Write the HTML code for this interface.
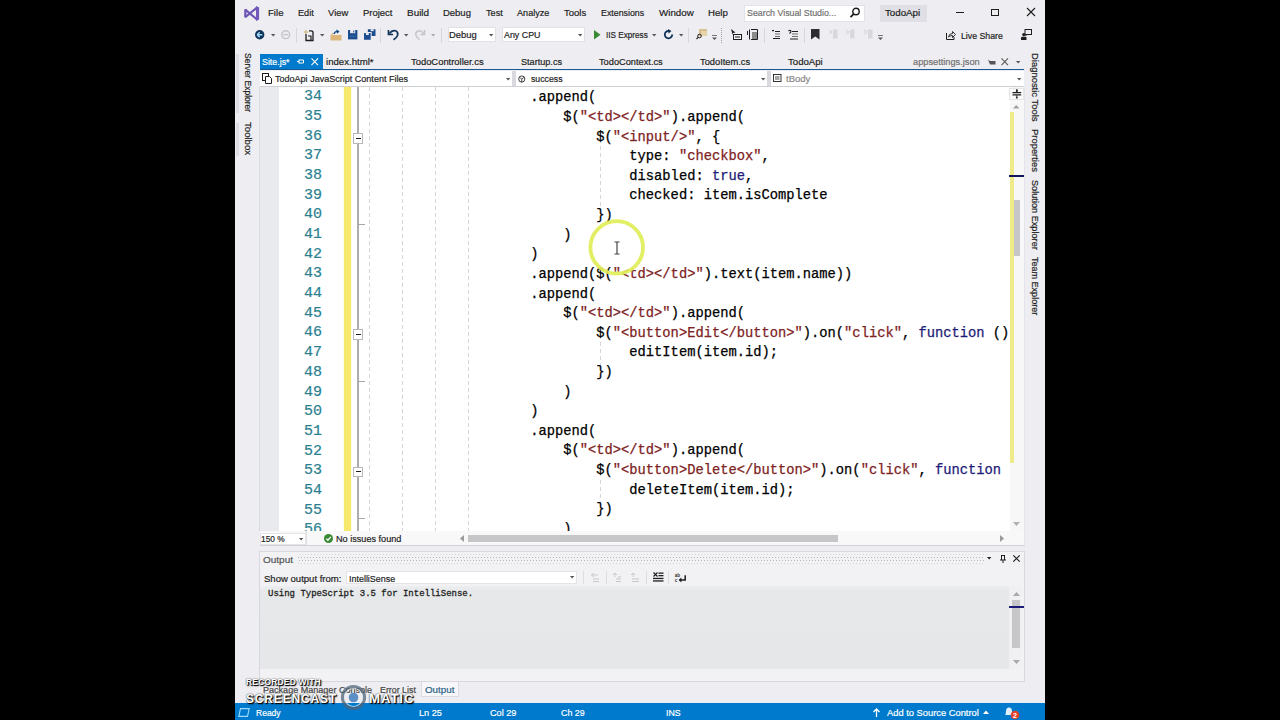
<!DOCTYPE html><html><head><meta charset="utf-8"><style>
*{margin:0;padding:0;box-sizing:border-box}
html,body{width:1280px;height:720px;overflow:hidden;background:#000}
body{position:relative;font-family:"Liberation Sans",sans-serif;font-size:9.3px;color:#1e1e1e}
.a{position:absolute;white-space:pre;line-height:1}
.c{position:absolute;white-space:pre;font-family:"Liberation Mono",monospace;font-size:13.77px;line-height:1;color:#000;-webkit-text-stroke:0.25px currentColor}
.s{color:#7E2222}
.t{color:#800000}
.k{color:#1C1C78}
.ln{position:absolute;font-family:"Liberation Mono",monospace;font-size:15px;line-height:1;color:#2B7F90;text-align:right;-webkit-text-stroke:0.2px #2B7F90;width:40px}
svg{position:absolute;overflow:visible}
</style></head><body>
<div class="a" style="left:235px;top:0px;width:810px;height:720px;background:#EEEEF2"></div>
<svg style="left:240px;top:2px" width="24" height="22" viewBox="0 0 24 22"><path d="M5.3 7.6 L17.2 17.6 L17.2 5.4 L5.3 15.2 Z" fill="none" stroke="#6F56B6" stroke-width="2.2" stroke-linejoin="bevel"/><path d="M16 4 L19.1 5.4 V17.4 L16 19 Z" fill="#7358BC"/></svg>
<div class="a" style="left:268.00px;top:7.80px;font-family:'Liberation Sans';font-size:9.8px;font-weight:normal;color:#1e1e1e;transform-origin:0 0;transform:scaleX(0.9812);-webkit-text-stroke:0.2px #1e1e1e;">File</div>
<div class="a" style="left:297.90px;top:7.80px;font-family:'Liberation Sans';font-size:9.8px;font-weight:normal;color:#1e1e1e;transform-origin:0 0;transform:scaleX(0.9354);-webkit-text-stroke:0.2px #1e1e1e;">Edit</div>
<div class="a" style="left:328.15px;top:7.80px;font-family:'Liberation Sans';font-size:9.8px;font-weight:normal;color:#1e1e1e;transform-origin:0 0;transform:scaleX(0.9662);-webkit-text-stroke:0.2px #1e1e1e;">View</div>
<div class="a" style="left:362.90px;top:7.80px;font-family:'Liberation Sans';font-size:9.8px;font-weight:normal;color:#1e1e1e;transform-origin:0 0;transform:scaleX(0.9672);-webkit-text-stroke:0.2px #1e1e1e;">Project</div>
<div class="a" style="left:406.90px;top:7.80px;font-family:'Liberation Sans';font-size:9.8px;font-weight:normal;color:#1e1e1e;transform-origin:0 0;transform:scaleX(1.0139);-webkit-text-stroke:0.2px #1e1e1e;">Build</div>
<div class="a" style="left:443.00px;top:7.80px;font-family:'Liberation Sans';font-size:9.8px;font-weight:normal;color:#1e1e1e;transform-origin:0 0;transform:scaleX(0.9662);-webkit-text-stroke:0.2px #1e1e1e;">Debug</div>
<div class="a" style="left:486.00px;top:7.80px;font-family:'Liberation Sans';font-size:9.8px;font-weight:normal;color:#1e1e1e;transform-origin:0 0;transform:scaleX(0.9350);-webkit-text-stroke:0.2px #1e1e1e;">Test</div>
<div class="a" style="left:517.20px;top:7.80px;font-family:'Liberation Sans';font-size:9.8px;font-weight:normal;color:#1e1e1e;transform-origin:0 0;transform:scaleX(0.9294);-webkit-text-stroke:0.2px #1e1e1e;">Analyze</div>
<div class="a" style="left:564.40px;top:7.80px;font-family:'Liberation Sans';font-size:9.8px;font-weight:normal;color:#1e1e1e;transform-origin:0 0;transform:scaleX(0.9705);-webkit-text-stroke:0.2px #1e1e1e;">Tools</div>
<div class="a" style="left:601.00px;top:7.80px;font-family:'Liberation Sans';font-size:9.8px;font-weight:normal;color:#1e1e1e;transform-origin:0 0;transform:scaleX(0.9012);-webkit-text-stroke:0.2px #1e1e1e;">Extensions</div>
<div class="a" style="left:658.80px;top:7.80px;font-family:'Liberation Sans';font-size:9.8px;font-weight:normal;color:#1e1e1e;transform-origin:0 0;transform:scaleX(0.9983);-webkit-text-stroke:0.2px #1e1e1e;">Window</div>
<div class="a" style="left:708.00px;top:7.80px;font-family:'Liberation Sans';font-size:9.8px;font-weight:normal;color:#1e1e1e;transform-origin:0 0;transform:scaleX(0.9823);-webkit-text-stroke:0.2px #1e1e1e;">Help</div>
<div class="a" style="left:743.5px;top:5px;width:121px;height:16.5px;background:#fff;border:1px solid #e2e2e8"></div>
<div class="a" style="left:747.40px;top:8.27px;font-family:'Liberation Sans';font-size:9.6px;font-weight:normal;color:#717171;transform-origin:0 0;transform:scaleX(0.9206);-webkit-text-stroke:0.2px #717171;">Search Visual Studio...</div>
<svg style="left:849px;top:7px" width="12" height="12" viewBox="0 0 12 12"><circle cx="7" cy="4.5" r="3.2" fill="none" stroke="#1e1e1e" stroke-width="1.4"/><path d="M4.8 6.8 L1.5 10.2" stroke="#1e1e1e" stroke-width="1.8"/></svg>
<div class="a" style="left:880px;top:5px;width:46.5px;height:17px;background:#dfdfe5"></div>
<div class="a" style="left:885.40px;top:8.17px;font-family:'Liberation Sans';font-size:9.6px;font-weight:normal;color:#1e1e1e;transform-origin:0 0;transform:scaleX(1.0152);-webkit-text-stroke:0.2px #1e1e1e;">TodoApi</div>
<div class="a" style="left:956px;top:11.5px;width:8px;height:1.2px;background:#1e1e1e"></div>
<div class="a" style="left:991px;top:8.5px;width:8px;height:7.5px;border:1.2px solid #1e1e1e"></div>
<svg style="left:1026.5px;top:8px" width="8" height="8" viewBox="0 0 8 8"><path d="M0 0 L8 8 M8 0 L0 8" stroke="#1e1e1e" stroke-width="1.1"/></svg>
<svg style="left:254.8px;top:30.2px" width="9.4" height="9.4" viewBox="0 0 10 10"><circle cx="5" cy="5" r="5" fill="#0E3157"/><path d="M2.2 5 L5 2.4 M2.2 5 L5 7.6 M2.4 5 H7.8" stroke="#9FD5F5" stroke-width="1.5" fill="none"/></svg>
<svg style="left:270.8px;top:33.699999999999996px" width="4.4" height="2.4" viewBox="0 0 4.4 2.4"><path d="M0 0 H4.4 L2.2 2.4 Z" fill="#555"/></svg>
<svg style="left:281px;top:30.2px" width="9.4" height="9.4" viewBox="0 0 10 10"><circle cx="5" cy="5" r="4.2" fill="none" stroke="#c4c4c8" stroke-width="1.5"/><path d="M2.6 5 H7.4" stroke="#c4c4c8" stroke-width="1.4"/></svg>
<div class="a" style="left:296px;top:28px;width:1px;height:15px;background:#d6d6dc"></div>
<svg style="left:304px;top:29.5px" width="11" height="11" viewBox="0 0 11 11"><path d="M2 4 V10.5 H9 V2.5 Q9 0.8 7 0.8 H5" fill="none" stroke="#1e1e1e" stroke-width="1.3"/><path d="M4 6 H7 V10" fill="none" stroke="#1e1e1e" stroke-width="1.2"/><path d="M2 0 V4 M0 2 H4" stroke="#C8B36A" stroke-width="1"/></svg>
<svg style="left:320.3px;top:33.699999999999996px" width="4.4" height="2.4" viewBox="0 0 4.4 2.4"><path d="M0 0 H4.4 L2.2 2.4 Z" fill="#555"/></svg>
<svg style="left:330px;top:29.5px" width="12" height="11" viewBox="0 0 12 11"><path d="M0.5 5 H11.5 V10.5 H0.5 Z" fill="#DCB67A"/><path d="M2 5 V3.5 H4" fill="none" stroke="#DCB67A" stroke-width="1"/><path d="M4 4 Q5 1 8 1.5 M6.5 0 L8.5 1.5 L7 3" fill="none" stroke="#1B4F8A" stroke-width="1.3"/></svg>
<svg style="left:347.8px;top:29.8px" width="9.4" height="9.4" viewBox="0 0 10 10"><path d="M0 0 H10 V10 H0 Z" fill="#1D4E8F"/><rect x="2.3" y="0" width="5.4" height="3.4" fill="#EEEEF2"/><rect x="5.6" y="0.6" width="1.1" height="2" fill="#1D4E8F"/><rect x="2" y="6.2" width="6" height="0.9" fill="#3E6FB0"/></svg>
<svg style="left:364px;top:29px" width="11.5" height="11" viewBox="0 0 12 11"><path d="M0 4 H7 V11 H0 Z" fill="#1D4E8F"/><rect x="2" y="4" width="3" height="2" fill="#EEEEF2"/><path d="M4 0 H12 V7 H8 V3 H4 Z" fill="#1D4E8F"/><rect x="7" y="0" width="3" height="2" fill="#EEEEF2"/></svg>
<div class="a" style="left:379.5px;top:28px;width:1px;height:15px;background:#d6d6dc"></div>
<svg style="left:387.5px;top:29px" width="11" height="11.5" viewBox="0 0 11 11.5"><path d="M1.5 4.5 Q4 0.8 7.5 1.8 Q10.5 3 9.5 6.5 Q8.7 8.6 5.5 10.8" fill="none" stroke="#0E3157" stroke-width="1.7"/><path d="M0.5 1 V5.5 H5" fill="none" stroke="#0E3157" stroke-width="1.7"/></svg>
<svg style="left:404.3px;top:33.699999999999996px" width="4.4" height="2.4" viewBox="0 0 4.4 2.4"><path d="M0 0 H4.4 L2.2 2.4 Z" fill="#555"/></svg>
<svg style="left:415px;top:29px" width="10" height="11" viewBox="0 0 10 11"><path d="M8.5 4.5 Q6 1 3 2 Q0 3.5 1 6.5 Q2 8.6 4.5 10.8" fill="none" stroke="#c4c4c8" stroke-width="1.5"/><path d="M9.5 1 V5.5 H5.5" fill="none" stroke="#c4c4c8" stroke-width="1.5"/></svg>
<svg style="left:431.3px;top:33.699999999999996px" width="4.4" height="2.4" viewBox="0 0 4.4 2.4"><path d="M0 0 H4.4 L2.2 2.4 Z" fill="#aaa"/></svg>
<div class="a" style="left:440.5px;top:28px;width:1px;height:15px;background:#d6d6dc"></div>
<div class="a" style="left:447.8px;top:26.9px;width:48.5px;height:15px;background:#fff;border:1px solid #e0e0e6"></div>
<div class="a" style="left:449.15px;top:29.57px;font-family:'Liberation Sans';font-size:9.6px;font-weight:normal;color:#1e1e1e;transform-origin:0 0;transform:scaleX(0.9794);-webkit-text-stroke:0.2px #1e1e1e;">Debug</div>
<svg style="left:488.8px;top:33.9px" width="4.4" height="2.4" viewBox="0 0 4.4 2.4"><path d="M0 0 H4.4 L2.2 2.4 Z" fill="#555"/></svg>
<div class="a" style="left:501.6px;top:26.9px;width:83.4px;height:15px;background:#fff;border:1px solid #e0e0e6"></div>
<div class="a" style="left:504.15px;top:29.57px;font-family:'Liberation Sans';font-size:9.6px;font-weight:normal;color:#1e1e1e;transform-origin:0 0;transform:scaleX(0.9239);-webkit-text-stroke:0.2px #1e1e1e;">Any CPU</div>
<svg style="left:578.3px;top:33.9px" width="4.4" height="2.4" viewBox="0 0 4.4 2.4"><path d="M0 0 H4.4 L2.2 2.4 Z" fill="#555"/></svg>
<svg style="left:594.4px;top:30px" width="6.5" height="9.5" viewBox="0 0 6.5 9.5"><path d="M0 0 L6.5 4.75 L0 9.5 Z" fill="#388A34"/></svg>
<div class="a" style="left:606.30px;top:29.87px;font-family:'Liberation Sans';font-size:9.6px;font-weight:normal;color:#1e1e1e;transform-origin:0 0;transform:scaleX(0.8520);-webkit-text-stroke:0.2px #1e1e1e;">IIS Express</div>
<svg style="left:652.3px;top:33.9px" width="4.4" height="2.4" viewBox="0 0 4.4 2.4"><path d="M0 0 H4.4 L2.2 2.4 Z" fill="#555"/></svg>
<svg style="left:663.5px;top:29px" width="10" height="11" viewBox="0 0 10 11"><path d="M8.2 5.5 A3.7 3.7 0 1 1 5 2" fill="none" stroke="#0E3157" stroke-width="1.8"/><path d="M4 0 L7.5 2 L4.5 4.5 Z" fill="#0E3157"/></svg>
<svg style="left:678.8px;top:33.9px" width="4.4" height="2.4" viewBox="0 0 4.4 2.4"><path d="M0 0 H4.4 L2.2 2.4 Z" fill="#555"/></svg>
<div class="a" style="left:688px;top:28px;width:1px;height:15px;background:#d6d6dc"></div>
<svg style="left:696px;top:29px" width="11" height="11" viewBox="0 0 11 11"><rect x="3" y="0" width="8" height="7" fill="#D9C08F"/><rect x="5" y="2" width="6" height="5" fill="#E5D3AC"/><circle cx="3.5" cy="7" r="1.8" fill="none" stroke="#1e1e1e" stroke-width="1"/><path d="M2.2 8.3 L0.5 10" stroke="#1e1e1e" stroke-width="1.1"/></svg>
<svg style="left:712px;top:35px" width="5" height="6" viewBox="0 0 5 6"><path d="M0 0.5 H5" stroke="#555" stroke-width="0.8"/><path d="M0 2.5 H5 L2.5 5 Z" fill="#555"/></svg>
<svg style="left:721px;top:28px" width="3" height="15" viewBox="0 0 3 15"><rect x="0" y="0" width="1" height="1" fill="#a0a0a8"/><rect x="0" y="2" width="1" height="1" fill="#a0a0a8"/><rect x="0" y="4" width="1" height="1" fill="#a0a0a8"/><rect x="0" y="6" width="1" height="1" fill="#a0a0a8"/><rect x="0" y="8" width="1" height="1" fill="#a0a0a8"/><rect x="0" y="10" width="1" height="1" fill="#a0a0a8"/><rect x="0" y="12" width="1" height="1" fill="#a0a0a8"/><rect x="0" y="14" width="1" height="1" fill="#a0a0a8"/></svg>
<svg style="left:730.6px;top:29px" width="11" height="11" viewBox="0 0 11 11"><path d="M0 0 L4.5 3.5 L2 4 L1.6 6 Z" fill="#1e1e1e"/><rect x="2.5" y="5.5" width="8" height="5" fill="none" stroke="#1e1e1e" stroke-width="1"/><rect x="4" y="7.5" width="5" height="1" fill="#1e1e1e"/></svg>
<svg style="left:747px;top:29px" width="11" height="11" viewBox="0 0 11 11"><path d="M0.5 2 V6" stroke="#1e1e1e" stroke-width="1"/><path d="M2.5 0.5 V10.5 M4 0.5 H10.5 V10.5 H4" fill="none" stroke="#1e1e1e" stroke-width="1"/><rect x="5" y="3" width="5" height="7" fill="#8a8a8a"/></svg>
<div class="a" style="left:763.5px;top:28px;width:1px;height:15px;background:#d6d6dc"></div>
<svg style="left:771.5px;top:30px" width="8" height="9" viewBox="0 0 8 9"><rect x="0" y="0" width="2" height="1.2" fill="#1e1e1e"/><rect x="3" y="1" width="5" height="1" fill="#1e1e1e"/><rect x="3" y="3.5" width="5" height="1" fill="#707070"/><rect x="3" y="6" width="5" height="1" fill="#707070"/><rect x="1" y="8" width="7" height="1" fill="#1e1e1e"/></svg>
<svg style="left:787.5px;top:30px" width="10" height="9.5" viewBox="0 0 10 9.5"><path d="M0.5 1 Q2 -0.5 3 1 Q3 2.5 1.5 3.5" fill="none" stroke="#1e1e1e" stroke-width="1.1"/><rect x="4" y="1" width="6" height="1" fill="#1e1e1e"/><rect x="4" y="3.5" width="6" height="1" fill="#707070"/><rect x="4" y="6" width="6" height="1" fill="#707070"/><rect x="2" y="8.5" width="8" height="1" fill="#1e1e1e"/></svg>
<div class="a" style="left:803.5px;top:28px;width:1px;height:15px;background:#d6d6dc"></div>
<svg style="left:811px;top:29px" width="8.5" height="10.5" viewBox="0 0 8.5 10.5"><path d="M0 0 H8.5 V10.5 L4.25 7.5 L0 10.5 Z" fill="#2d2d30"/></svg>
<svg style="left:829px;top:29px" width="9" height="10" viewBox="0 0 9 10"><path d="M0 1 L3 3 L0 5" fill="none" stroke="#cfcfd4" stroke-width="1"/><rect x="4" y="0.5" width="4.5" height="9" fill="#d8d8dc"/></svg>
<svg style="left:846px;top:29px" width="9" height="10" viewBox="0 0 9 10"><path d="M0 1 L3 3 L0 5" fill="none" stroke="#cfcfd4" stroke-width="1"/><rect x="4" y="0.5" width="4.5" height="9" fill="#d8d8dc"/></svg>
<svg style="left:864px;top:29px" width="9" height="10" viewBox="0 0 9 10"><path d="M0 1 L3 3 L0 5" fill="none" stroke="#cfcfd4" stroke-width="1"/><rect x="4" y="0.5" width="4.5" height="9" fill="#d8d8dc"/></svg>
<svg style="left:877.5px;top:35px" width="5" height="6" viewBox="0 0 5 6"><path d="M0 0.5 H5" stroke="#555" stroke-width="0.8"/><path d="M0 2.5 H5 L2.5 5 Z" fill="#555"/></svg>
<svg style="left:946px;top:30px" width="10" height="10" viewBox="0 0 10 10"><path d="M0.5 3 V9.5 H8 V7" fill="none" stroke="#1e1e1e" stroke-width="1"/><path d="M2.5 7 Q3 3.5 6.5 3.5 V1.5 L9.5 4.5 L6.5 7.5 V5.5 Q4 5.5 2.5 7 Z" fill="none" stroke="#1e1e1e" stroke-width="0.9"/></svg>
<div class="a" style="left:960.80px;top:30.67px;font-family:'Liberation Sans';font-size:9.6px;font-weight:normal;color:#1e1e1e;transform-origin:0 0;transform:scaleX(0.9112);-webkit-text-stroke:0.2px #1e1e1e;">Live Share</div>
<svg style="left:1021px;top:29px" width="11" height="11" viewBox="0 0 11 11"><rect x="4" y="0.5" width="6.5" height="5" fill="none" stroke="#1e1e1e" stroke-width="1"/><path d="M5 5.5 L4 7.5 L7 5.5" fill="#1e1e1e"/><circle cx="2.8" cy="5.6" r="1.6" fill="#1e1e1e"/><path d="M0 11 V9 Q0 7.8 1.5 7.8 H4.2 Q5.5 7.8 5.5 9 V11 Z" fill="#1e1e1e"/></svg>
<div class="a" style="left:235.5px;top:54px;width:3.5px;height:58.5px;background:#DCDDE5"></div>
<div class="a" style="left:235.5px;top:122.5px;width:3.5px;height:33px;background:#DCDDE5"></div>
<div class="a" style="left:253.00px;top:53.40px;font-size:9.6px;color:#1e1e1e;transform-origin:0 0;transform:rotate(90deg) scaleX(0.8881);-webkit-text-stroke:0.2px #1e1e1e">Server Explorer</div>
<div class="a" style="left:253.00px;top:121.90px;font-size:9.6px;color:#1e1e1e;transform-origin:0 0;transform:rotate(90deg) scaleX(1.0007);-webkit-text-stroke:0.2px #1e1e1e">Toolbox</div>
<div class="a" style="left:1023.5px;top:87px;width:1px;height:460px;background:#e4e4ea"></div>
<div class="a" style="left:1040.00px;top:53.00px;font-size:9.6px;color:#1e1e1e;transform-origin:0 0;transform:rotate(90deg) scaleX(0.9830);-webkit-text-stroke:0.2px #1e1e1e">Diagnostic Tools</div>
<div class="a" style="left:1040.00px;top:129.20px;font-size:9.6px;color:#1e1e1e;transform-origin:0 0;transform:rotate(90deg) scaleX(0.9809);-webkit-text-stroke:0.2px #1e1e1e">Properties</div>
<div class="a" style="left:1040.00px;top:179.80px;font-size:9.6px;color:#1e1e1e;transform-origin:0 0;transform:rotate(90deg) scaleX(0.9553);-webkit-text-stroke:0.2px #1e1e1e">Solution Explorer</div>
<div class="a" style="left:1040.00px;top:257.40px;font-size:9.6px;color:#1e1e1e;transform-origin:0 0;transform:rotate(90deg) scaleX(0.9408);-webkit-text-stroke:0.2px #1e1e1e">Team Explorer</div>
<div class="a" style="left:259.5px;top:54px;width:63px;height:15px;background:#007ACC"></div>
<div class="a" style="left:262.30px;top:57.17px;font-family:'Liberation Sans';font-size:9.6px;font-weight:normal;color:#ffffff;transform-origin:0 0;transform:scaleX(0.9210);-webkit-text-stroke:0.2px #ffffff;">Site.js*</div>
<svg style="left:296.5px;top:59px" width="7" height="5" viewBox="0 0 7 5"><path d="M0 2.5 H2 M2 0.5 V4.5 M2 1 H6.5 V4 H2" fill="none" stroke="#fff" stroke-width="1"/></svg>
<svg style="left:311px;top:57.5px" width="7.5" height="7.5" viewBox="0 0 8 8"><path d="M0.5 0.5 L7.5 7.5 M7.5 0.5 L0.5 7.5" stroke="#fff" stroke-width="1.2"/></svg>
<div class="a" style="left:326.00px;top:57.17px;font-family:'Liberation Sans';font-size:9.6px;font-weight:normal;color:#1e1e1e;transform-origin:0 0;transform:scaleX(1.0028);-webkit-text-stroke:0.2px #1e1e1e;">index.html*</div>
<div class="a" style="left:411.30px;top:57.17px;font-family:'Liberation Sans';font-size:9.6px;font-weight:normal;color:#1e1e1e;transform-origin:0 0;transform:scaleX(0.9794);-webkit-text-stroke:0.2px #1e1e1e;">TodoController.cs</div>
<div class="a" style="left:520.80px;top:57.17px;font-family:'Liberation Sans';font-size:9.6px;font-weight:normal;color:#1e1e1e;transform-origin:0 0;transform:scaleX(0.9490);-webkit-text-stroke:0.2px #1e1e1e;">Startup.cs</div>
<div class="a" style="left:598.90px;top:57.17px;font-family:'Liberation Sans';font-size:9.6px;font-weight:normal;color:#1e1e1e;transform-origin:0 0;transform:scaleX(0.9633);-webkit-text-stroke:0.2px #1e1e1e;">TodoContext.cs</div>
<div class="a" style="left:700.20px;top:57.17px;font-family:'Liberation Sans';font-size:9.6px;font-weight:normal;color:#1e1e1e;transform-origin:0 0;transform:scaleX(0.9684);-webkit-text-stroke:0.2px #1e1e1e;">TodoItem.cs</div>
<div class="a" style="left:787.80px;top:57.17px;font-family:'Liberation Sans';font-size:9.6px;font-weight:normal;color:#1e1e1e;transform-origin:0 0;transform:scaleX(1.0008);-webkit-text-stroke:0.2px #1e1e1e;">TodoApi</div>
<div class="a" style="left:913.10px;top:57.17px;font-family:'Liberation Sans';font-size:9.6px;font-weight:normal;color:#717171;transform-origin:0 0;transform:scaleX(0.9619);-webkit-text-stroke:0.2px #717171;">appsettings.json</div>
<svg style="left:987.5px;top:58.5px" width="8" height="6" viewBox="0 0 8 6"><path d="M0 0.5 L2 2 H7.5 V5.5 H2 Z" fill="#555"/></svg>
<svg style="left:1001px;top:57.5px" width="7.5" height="7.5" viewBox="0 0 8 8"><path d="M0.5 0.5 L7.5 7.5 M7.5 0.5 L0.5 7.5" stroke="#555" stroke-width="1.1"/></svg>
<svg style="left:1015.8px;top:60.9px" width="4.4" height="2.4" viewBox="0 0 4.4 2.4"><path d="M0 0 H4.4 L2.2 2.4 Z" fill="#555"/></svg>
<div class="a" style="left:259.5px;top:68.6px;width:764px;height:1.8px;background:#155A94"></div>
<div class="a" style="left:259.5px;top:70.5px;width:764px;height:16px;background:#fff;border-bottom:1px solid #cfcfd6"></div>
<div class="a" style="left:512px;top:70.5px;width:4px;height:15.5px;background:#d8d8de"></div>
<div class="a" style="left:767px;top:70.5px;width:3.5px;height:15.5px;background:#d8d8de"></div>
<svg style="left:262px;top:73px" width="10" height="11" viewBox="0 0 10 11"><rect x="0.5" y="0.5" width="6" height="7" fill="none" stroke="#1e1e1e" stroke-width="1"/><path d="M3.5 3.5 H7.5 L9.5 5.5 V10.5 H3.5 Z" fill="#fff" stroke="#1e1e1e" stroke-width="1"/></svg>
<div class="a" style="left:275.40px;top:74.37px;font-family:'Liberation Sans';font-size:9.6px;font-weight:normal;color:#1e1e1e;transform-origin:0 0;transform:scaleX(0.9412);-webkit-text-stroke:0.2px #1e1e1e;">TodoApi JavaScript Content Files</div>
<svg style="left:505.8px;top:77.9px" width="4.4" height="2.4" viewBox="0 0 4.4 2.4"><path d="M0 0 H4.4 L2.2 2.4 Z" fill="#555"/></svg>
<svg style="left:518px;top:74.5px" width="7.5" height="8" viewBox="0 0 8 8"><circle cx="4" cy="4" r="3.3" fill="none" stroke="#1e1e1e" stroke-width="0.9"/><path d="M4 4 V7.5 M4 4 L1.5 2.2 M4 4 L6.5 2.2" stroke="#1e1e1e" stroke-width="0.8"/></svg>
<div class="a" style="left:531.10px;top:74.17px;font-family:'Liberation Sans';font-size:9.6px;font-weight:normal;color:#1e1e1e;transform-origin:0 0;transform:scaleX(0.9089);-webkit-text-stroke:0.2px #1e1e1e;">success</div>
<svg style="left:761.3px;top:77.9px" width="4.4" height="2.4" viewBox="0 0 4.4 2.4"><path d="M0 0 H4.4 L2.2 2.4 Z" fill="#555"/></svg>
<svg style="left:773px;top:74px" width="8.5" height="8" viewBox="0 0 8.5 8"><rect x="0.5" y="0.5" width="7.5" height="7" fill="none" stroke="#1e1e1e" stroke-width="0.9"/><path d="M2 3 H6.5 M2 5 H6.5" stroke="#1e1e1e" stroke-width="0.8"/></svg>
<div class="a" style="left:786.10px;top:74.17px;font-family:'Liberation Sans';font-size:9.6px;font-weight:normal;color:#888;transform-origin:0 0;transform:scaleX(0.9940);-webkit-text-stroke:0.2px #888;">tBody</div>
<svg style="left:1016.8px;top:77.9px" width="4.4" height="2.4" viewBox="0 0 4.4 2.4"><path d="M0 0 H4.4 L2.2 2.4 Z" fill="#555"/></svg>
<div class="a" style="left:259.5px;top:87px;width:751px;height:444px;background:#fff"></div>
<div class="a" style="left:259.5px;top:87px;width:19.5px;height:444px;background:#E9EAEE"></div>
<div class="a" style="left:258.8px;top:87px;width:1.2px;height:444px;background:#DADADF"></div>
<div class="a" style="left:344px;top:87px;width:7px;height:444px;background:#F6E86A;box-shadow:0 0 1px #F6E86A"></div>
<div class="a" style="left:357.2px;top:87px;width:1.6px;height:444px;background:#ADADAD"></div>
<div class="a" style="left:259.5px;top:87px;width:751px;height:444px;overflow:hidden">
<div class="a" style="left:109.00px;top:0.00px;width:1px;height:444.00px;background:repeating-linear-gradient(to bottom,#d6d6d6 0,#d6d6d6 4px,transparent 4px,transparent 7px)"></div>
<div class="a" style="left:142.04px;top:0.00px;width:1px;height:444.00px;background:repeating-linear-gradient(to bottom,#d6d6d6 0,#d6d6d6 4px,transparent 4px,transparent 7px)"></div>
<div class="a" style="left:175.08px;top:0.00px;width:1px;height:444.00px;background:repeating-linear-gradient(to bottom,#d6d6d6 0,#d6d6d6 4px,transparent 4px,transparent 7px)"></div>
<div class="a" style="left:208.12px;top:0.00px;width:1px;height:444.00px;background:repeating-linear-gradient(to bottom,#d6d6d6 0,#d6d6d6 4px,transparent 4px,transparent 7px)"></div>
<div class="a" style="left:340.28px;top:59.19px;width:1px;height:64.86px;background:repeating-linear-gradient(to bottom,#d6d6d6 0,#d6d6d6 4px,transparent 4px,transparent 7px)"></div>
<div class="a" style="left:340.28px;top:255.39px;width:1px;height:25.62px;background:repeating-linear-gradient(to bottom,#d6d6d6 0,#d6d6d6 4px,transparent 4px,transparent 7px)"></div>
<div class="a" style="left:340.28px;top:392.73px;width:1px;height:25.62px;background:repeating-linear-gradient(to bottom,#d6d6d6 0,#d6d6d6 4px,transparent 4px,transparent 7px)"></div>
<div class="c" style="left:270.70px;top:4.33px">.append(</div>
<div class="ln" style="left:22.5px;top:2.31px">34</div>
<div class="c" style="left:303.74px;top:23.95px">$(<span class="s">&quot;&lt;td&gt;&lt;/td&gt;&quot;</span>).append(</div>
<div class="ln" style="left:22.5px;top:21.99px">35</div>
<div class="c" style="left:336.78px;top:43.57px">$(<span class="s">&quot;&lt;input/&gt;&quot;</span>, {</div>
<div class="ln" style="left:22.5px;top:41.67px">36</div>
<div class="c" style="left:369.82px;top:63.19px">type: <span class="s">&quot;checkbox&quot;</span>,</div>
<div class="ln" style="left:22.5px;top:61.35px">37</div>
<div class="c" style="left:369.82px;top:82.81px">disabled: <span class="k">true</span>,</div>
<div class="ln" style="left:22.5px;top:81.03px">38</div>
<div class="c" style="left:369.82px;top:102.43px">checked: item.isComplete</div>
<div class="ln" style="left:22.5px;top:100.71px">39</div>
<div class="c" style="left:336.78px;top:122.05px">})</div>
<div class="ln" style="left:22.5px;top:120.39px">40</div>
<div class="c" style="left:303.74px;top:141.67px">)</div>
<div class="ln" style="left:22.5px;top:140.07px">41</div>
<div class="c" style="left:270.70px;top:161.29px">)</div>
<div class="ln" style="left:22.5px;top:159.75px">42</div>
<div class="c" style="left:270.70px;top:180.91px">.append($(<span class="s">&quot;&lt;td&gt;&lt;/td&gt;&quot;</span>).text(item.name))</div>
<div class="ln" style="left:22.5px;top:179.43px">43</div>
<div class="c" style="left:270.70px;top:200.53px">.append(</div>
<div class="ln" style="left:22.5px;top:199.11px">44</div>
<div class="c" style="left:303.74px;top:220.15px">$(<span class="s">&quot;&lt;td&gt;&lt;/td&gt;&quot;</span>).append(</div>
<div class="ln" style="left:22.5px;top:218.79px">45</div>
<div class="c" style="left:336.78px;top:239.77px">$(<span class="s">&quot;&lt;button&gt;Edit&lt;/button&gt;&quot;</span>).on(<span class="s">&quot;click&quot;</span>, <span class="k">function</span> ()</div>
<div class="ln" style="left:22.5px;top:238.47px">46</div>
<div class="c" style="left:369.82px;top:259.39px">editItem(item.id);</div>
<div class="ln" style="left:22.5px;top:258.15px">47</div>
<div class="c" style="left:336.78px;top:279.01px">})</div>
<div class="ln" style="left:22.5px;top:277.83px">48</div>
<div class="c" style="left:303.74px;top:298.63px">)</div>
<div class="ln" style="left:22.5px;top:297.51px">49</div>
<div class="c" style="left:270.70px;top:318.25px">)</div>
<div class="ln" style="left:22.5px;top:317.19px">50</div>
<div class="c" style="left:270.70px;top:337.87px">.append(</div>
<div class="ln" style="left:22.5px;top:336.87px">51</div>
<div class="c" style="left:303.74px;top:357.49px">$(<span class="s">&quot;&lt;td&gt;&lt;/td&gt;&quot;</span>).append(</div>
<div class="ln" style="left:22.5px;top:356.55px">52</div>
<div class="c" style="left:336.78px;top:377.11px">$(<span class="s">&quot;&lt;button&gt;Delete&lt;/button&gt;&quot;</span>).on(<span class="s">&quot;click&quot;</span>, <span class="k">function</span> ()</div>
<div class="ln" style="left:22.5px;top:376.23px">53</div>
<div class="c" style="left:369.82px;top:396.73px">deleteItem(item.id);</div>
<div class="ln" style="left:22.5px;top:395.91px">54</div>
<div class="c" style="left:336.78px;top:416.35px">})</div>
<div class="ln" style="left:22.5px;top:415.59px">55</div>
<div class="c" style="left:303.74px;top:435.97px">)</div>
<div class="ln" style="left:22.5px;top:435.27px">56</div>
<div class="a" style="left:98.5px;top:136.92px;width:6.5px;height:1.2px;background:#A6A6A6"></div>
<div class="a" style="left:98.5px;top:293.88px;width:6.5px;height:1.2px;background:#A6A6A6"></div>
<div class="a" style="left:98.5px;top:431.22px;width:6.5px;height:1.2px;background:#A6A6A6"></div>
<div class="a" style="left:93.5px;top:46.04px;width:10px;height:10.5px;background:#fff;border:1px solid #B8B8B8"></div>
<div class="a" style="left:96.0px;top:50.54px;width:5px;height:1.2px;background:#1e1e1e"></div>
<div class="a" style="left:93.5px;top:242.24px;width:10px;height:10.5px;background:#fff;border:1px solid #B8B8B8"></div>
<div class="a" style="left:96.0px;top:246.74px;width:5px;height:1.2px;background:#1e1e1e"></div>
<div class="a" style="left:93.5px;top:379.58px;width:10px;height:10.5px;background:#fff;border:1px solid #B8B8B8"></div>
<div class="a" style="left:96.0px;top:384.08px;width:5px;height:1.2px;background:#1e1e1e"></div>
</div>
<div class="a" style="left:1009.5px;top:87px;width:14px;height:444px;background:#F7F7F8"></div>
<div class="a" style="left:1009.3px;top:88.3px;width:14.5px;height:11.5px;background:#fbfbfb;border:1px solid #e6e6e6"></div>
<svg style="left:1011.5px;top:88.5px" width="10" height="11" viewBox="0 0 10 11"><path d="M0.5 3.7 H9.2 M0.5 5.8 H9.2" stroke="#1e1e1e" stroke-width="1.2"/><path d="M4.85 0.8 V3.2 M4.85 6.3 V9.5" stroke="#1e1e1e" stroke-width="1"/><circle cx="4.85" cy="1.2" r="0.9" fill="#1e1e1e"/><path d="M3.6 2.2 L4.85 3.3 L6.1 2.2 Z M3.6 8.2 L4.85 9.6 L6.1 8.2 Z" fill="#1e1e1e"/></svg>
<svg style="left:1013px;top:105.2px" width="6.5" height="3.6" viewBox="0 0 6.5 3.6"><path d="M0 3.6 L3.25 0 L6.5 3.6 Z" fill="#a0a0a0"/></svg>
<div class="a" style="left:1010px;top:111.7px;width:4px;height:351.6px;background:#EFEB88"></div>
<div class="a" style="left:1013.5px;top:200px;width:6.7px;height:56.3px;background:#C6C6C8"></div>
<div class="a" style="left:1008.5px;top:174.5px;width:15px;height:2px;background:#14145a"></div>
<svg style="left:1013px;top:521.5px" width="7" height="4" viewBox="0 0 7 4"><path d="M0 0 L3.5 4 L7 0 Z" fill="#b0b0b0"/></svg>
<div class="a" style="left:259.5px;top:531px;width:764px;height:14.5px;background:#F8F8F9"></div>
<div class="a" style="left:259.5px;top:532.7px;width:46px;height:12px;background:#fff;border:1px solid #e4e4e8"></div>
<div class="a" style="left:261.00px;top:535.08px;font-family:'Liberation Sans';font-size:9.0px;font-weight:normal;color:#1e1e1e;transform-origin:0 0;transform:scaleX(0.9244);-webkit-text-stroke:0.2px #1e1e1e;">150 %</div>
<svg style="left:298.8px;top:538.4px" width="4.4" height="2.4" viewBox="0 0 4.4 2.4"><path d="M0 0 H4.4 L2.2 2.4 Z" fill="#555"/></svg>
<div class="a" style="left:306px;top:531px;width:1px;height:14px;background:#e0e0e4"></div>
<svg style="left:323.9px;top:534.2px" width="9" height="9" viewBox="0 0 9 9"><circle cx="4.5" cy="4.5" r="4.5" fill="#388A34"/><path d="M2.2 4.6 L3.9 6.2 L6.8 2.9" fill="none" stroke="#fff" stroke-width="1.3"/></svg>
<div class="a" style="left:336.20px;top:534.83px;font-family:'Liberation Sans';font-size:9.3px;font-weight:normal;color:#1e1e1e;transform-origin:0 0;transform:scaleX(0.9809);-webkit-text-stroke:0.2px #1e1e1e;">No issues found</div>
<svg style="left:460.3px;top:535px" width="4" height="7" viewBox="0 0 4 7"><path d="M4 0 L0 3.5 L4 7 Z" fill="#9a9a9a"/></svg>
<div class="a" style="left:468px;top:535px;width:370px;height:6.8px;background:#C6C6C8"></div>
<svg style="left:1000px;top:535px" width="4" height="7" viewBox="0 0 4 7"><path d="M0 0 L4 3.5 L0 7 Z" fill="#9a9a9a"/></svg>
<div class="a" style="left:259.5px;top:545.3px;width:764px;height:1px;background:#d0d0d6"></div>
<div class="a" style="left:259px;top:550.5px;width:765.5px;height:131px;background:#F2F2F5;border:1px solid #d8d8de"></div>
<div class="a" style="left:262.50px;top:554.87px;font-family:'Liberation Sans';font-size:9.6px;font-weight:normal;color:#555;transform-origin:0 0;transform:scaleX(1.0412);-webkit-text-stroke:0.2px #555;">Output</div>
<div class="a" style="left:297.5px;top:556.5px;width:686px;height:1px;background-image:linear-gradient(to right,#b6b6be 1px,transparent 1px);background-size:3px 1px"></div>
<div class="a" style="left:299px;top:559.5px;width:686px;height:1px;background-image:linear-gradient(to right,#b6b6be 1px,transparent 1px);background-size:3px 1px"></div>
<div class="a" style="left:299px;top:553.5px;width:686px;height:1px;opacity:0.45;background-image:linear-gradient(to right,#b6b6be 1px,transparent 1px);background-size:3px 1px"></div>
<div class="a" style="left:297.5px;top:562.5px;width:686px;height:1px;opacity:0.45;background-image:linear-gradient(to right,#b6b6be 1px,transparent 1px);background-size:3px 1px"></div>
<svg style="left:987.3px;top:557.1999999999999px" width="4.4" height="2.4" viewBox="0 0 4.4 2.4"><path d="M0 0 H4.4 L2.2 2.4 Z" fill="#1e1e1e"/></svg>
<svg style="left:999.5px;top:554.5px" width="6" height="8" viewBox="0 0 6 8"><path d="M1 0.5 H5 M1.5 0.5 V5 M4.5 0.5 V5 M0 5 H6 M3 5 V8" fill="none" stroke="#1e1e1e" stroke-width="1"/></svg>
<svg style="left:1012.5px;top:554.5px" width="7" height="7" viewBox="0 0 7 7"><path d="M0.3 0.3 L6.7 6.7 M6.7 0.3 L0.3 6.7" stroke="#1e1e1e" stroke-width="1.2"/></svg>
<div class="a" style="left:264.40px;top:573.92px;font-family:'Liberation Sans';font-size:9.6px;font-weight:normal;color:#1e1e1e;transform-origin:0 0;transform:scaleX(0.9947);-webkit-text-stroke:0.2px #1e1e1e;">Show output from:</div>
<div class="a" style="left:346.2px;top:570.5px;width:230.8px;height:13.5px;background:#fff;border:1px solid #e4e4e8"></div>
<div class="a" style="left:349.40px;top:573.92px;font-family:'Liberation Sans';font-size:9.6px;font-weight:normal;color:#1e1e1e;transform-origin:0 0;transform:scaleX(0.9313);-webkit-text-stroke:0.2px #1e1e1e;">IntelliSense</div>
<svg style="left:569.8px;top:576.4px" width="4.4" height="2.4" viewBox="0 0 4.4 2.4"><path d="M0 0 H4.4 L2.2 2.4 Z" fill="#555"/></svg>
<div class="a" style="left:582.5px;top:571px;width:1px;height:13px;background:#dcdce2"></div>
<div class="a" style="left:605.5px;top:571px;width:1px;height:13px;background:#dcdce2"></div>
<div class="a" style="left:645.5px;top:571px;width:1px;height:13px;background:#dcdce2"></div>
<div class="a" style="left:668px;top:571px;width:1px;height:13px;background:#dcdce2"></div>
<svg style="left:590px;top:572px" width="10" height="11" viewBox="0 0 10 11"><path d="M4 1 L1.5 3 L4 5 M1.5 3 H8 M3 7 H9 M3 9.5 H9" fill="none" stroke="#c8c8cc" stroke-width="1"/></svg>
<svg style="left:612px;top:572px" width="10" height="11" viewBox="0 0 10 11"><path d="M3 5 V1 M1 3 L3 1 L5 3 M4 7 H9 M4 9.5 H9 M6 5 H9" fill="none" stroke="#c8c8cc" stroke-width="1"/></svg>
<svg style="left:630px;top:572px" width="10" height="11" viewBox="0 0 10 11"><path d="M3 5 V1 M1 3 L3 1 L5 3 M2 7 H9 M2 9.5 H9" fill="none" stroke="#c8c8cc" stroke-width="1"/></svg>
<svg style="left:653px;top:572px" width="10.5" height="11" viewBox="0 0 10.5 11"><path d="M0.5 0.5 L4.5 4.5 M4.5 0.5 L0.5 4.5" stroke="#1e1e1e" stroke-width="1.1"/><rect x="5.5" y="0.5" width="5" height="1.3" fill="#1e1e1e"/><rect x="5.5" y="3" width="5" height="1.3" fill="#1e1e1e"/><rect x="0" y="5.8" width="10.5" height="1.3" fill="#1e1e1e"/><rect x="0" y="8.3" width="10.5" height="1.3" fill="#1e1e1e"/></svg>
<svg style="left:675px;top:572.5px" width="11" height="10" viewBox="0 0 11 10"><text x="-0.3" y="3.8" font-size="4.6" font-weight="bold" font-family="Liberation Sans" fill="#333">ab</text><text x="-0.3" y="8.6" font-size="4.6" font-weight="bold" font-family="Liberation Sans" fill="#333">c</text><path d="M10.2 2.2 V7 H4.8" fill="none" stroke="#1e1e1e" stroke-width="1.5"/><path d="M3.6 7 L6.4 4.6 V9.4 Z" fill="#1e1e1e"/></svg>
<div class="a" style="left:260px;top:585.5px;width:749px;height:83px;background:linear-gradient(to bottom,#eceef0 0,#E6E8E9 5px,#E5E7E8 100%)"></div>
<div class="a" style="left:268.15px;top:589.05px;font-family:'Liberation Mono';font-size:9.6px;font-weight:normal;color:#1e1e1e;transform-origin:0 0;transform:scaleX(0.9377);-webkit-text-stroke:0.2px #1e1e1e;-webkit-text-stroke:0.3px #1e1e1e">Using TypeScript 3.5 for IntelliSense.</div>
<div class="a" style="left:1009px;top:586px;width:13px;height:83px;background:#F0F0F3"></div>
<svg style="left:1012.5px;top:592px" width="7" height="4" viewBox="0 0 7 4"><path d="M0 4 L3.5 0 L7 4 Z" fill="#a8a8a8"/></svg>
<div class="a" style="left:1012.2px;top:600px;width:7.8px;height:48px;background:#C6C6C8"></div>
<div class="a" style="left:1009px;top:606.3px;width:15px;height:1.4px;background:#1c1c78"></div>
<svg style="left:1012.5px;top:659.5px" width="7" height="4" viewBox="0 0 7 4"><path d="M0 0 L3.5 4 L7 0 Z" fill="#a8a8a8"/></svg>
<div class="a" style="left:262.80px;top:684.87px;font-family:'Liberation Sans';font-size:9.6px;font-weight:normal;color:#444;transform-origin:0 0;transform:scaleX(0.9427);-webkit-text-stroke:0.2px #444;">Package Manager Console</div>
<div class="a" style="left:380.10px;top:684.87px;font-family:'Liberation Sans';font-size:9.6px;font-weight:normal;color:#444;transform-origin:0 0;transform:scaleX(0.9224);-webkit-text-stroke:0.2px #444;">Error List</div>
<div class="a" style="left:421px;top:682px;width:37.6px;height:15px;background:#F7F7F9;border:1px solid #dcdce2;border-top:none"></div>
<div class="a" style="left:425.10px;top:684.87px;font-family:'Liberation Sans';font-size:9.6px;font-weight:normal;color:#2e6488;transform-origin:0 0;transform:scaleX(1.0204);-webkit-text-stroke:0.2px #2e6488;">Output</div>
<div class="a" style="left:235px;top:702.5px;width:810px;height:17.5px;background:#007ACC"></div>
<svg style="left:238px;top:708px" width="12" height="9" viewBox="0 0 12 9"><path d="M2.5 0.6 H11.2 L9.5 8.4 H0.8 Z" fill="none" stroke="#9ADBFF" stroke-width="1.1"/></svg>
<div class="a" style="left:256.30px;top:707.50px;font-family:'Liberation Sans';font-size:9.8px;font-weight:normal;color:#ffffff;transform-origin:0 0;transform:scaleX(0.8684);-webkit-text-stroke:0.2px #ffffff;">Ready</div>
<div class="a" style="left:419.40px;top:707.50px;font-family:'Liberation Sans';font-size:9.8px;font-weight:normal;color:#ffffff;transform-origin:0 0;transform:scaleX(0.9335);-webkit-text-stroke:0.2px #ffffff;">Ln 25</div>
<div class="a" style="left:490.00px;top:707.50px;font-family:'Liberation Sans';font-size:9.8px;font-weight:normal;color:#ffffff;transform-origin:0 0;transform:scaleX(0.9319);-webkit-text-stroke:0.2px #ffffff;">Col 29</div>
<div class="a" style="left:561.00px;top:707.50px;font-family:'Liberation Sans';font-size:9.8px;font-weight:normal;color:#ffffff;transform-origin:0 0;transform:scaleX(0.9023);-webkit-text-stroke:0.2px #ffffff;">Ch 29</div>
<div class="a" style="left:666.00px;top:707.50px;font-family:'Liberation Sans';font-size:9.8px;font-weight:normal;color:#ffffff;transform-origin:0 0;transform:scaleX(0.8933);-webkit-text-stroke:0.2px #ffffff;">INS</div>
<div class="a" style="left:886.80px;top:707.50px;font-family:'Liberation Sans';font-size:9.8px;font-weight:normal;color:#ffffff;transform-origin:0 0;transform:scaleX(0.9524);-webkit-text-stroke:0.2px #ffffff;">Add to Source Control</div>
<svg style="left:873.4px;top:707.5px" width="7" height="9" viewBox="0 0 7 9"><path d="M3.5 9 V1 M0.5 4 L3.5 1 L6.5 4" fill="none" stroke="#fff" stroke-width="1.3"/></svg>
<svg style="left:983px;top:709.5px" width="6" height="4" viewBox="0 0 6 4"><path d="M0 4 L3 0.5 L6 4 Z" fill="#fff"/></svg>
<svg style="left:1004px;top:706px" width="16" height="14" viewBox="0 0 16 14"><path d="M1 9 Q2 8 2 5 Q2 1.5 5 1.5 Q8 1.5 8 5 Q8 8 9 9 Z" fill="#dfefff"/><circle cx="11" cy="9" r="4.3" fill="#E8412A"/><text x="8.9" y="11.6" font-size="7" font-weight="bold" font-family="Liberation Sans" fill="#fff">2</text></svg>
<div class="a" style="left:246.40px;top:677.68px;font-family:'Liberation Sans';font-size:9.0px;font-weight:bold;color:#fff;transform-origin:0 0;transform:scaleX(0.9408);-webkit-text-stroke:0.2px #fff;-webkit-text-stroke:0;text-shadow:1px 1px 1.5px #000,0 0 1.5px rgba(0,0,0,0.9),1px 1px 0 rgba(0,0,0,0.7);letter-spacing:0.2px;">RECORDED WITH</div>
<div class="a" style="left:246.10px;top:693.14px;font-family:'Liberation Sans';font-size:12.0px;font-weight:bold;color:#fff;transform-origin:0 0;transform:scaleX(1.0035);-webkit-text-stroke:0.2px #fff;-webkit-text-stroke:0;text-shadow:1px 1px 1.5px #000,0 0 1.5px rgba(0,0,0,0.9),1px 1px 0 rgba(0,0,0,0.7);letter-spacing:0.8px;">SCREENCAST</div>
<div class="a" style="left:369.10px;top:693.14px;font-family:'Liberation Sans';font-size:12.0px;font-weight:bold;color:#fff;transform-origin:0 0;transform:scaleX(1.1040);-webkit-text-stroke:0.2px #fff;-webkit-text-stroke:0;text-shadow:1px 1px 1.5px #000,0 0 1.5px rgba(0,0,0,0.9),1px 1px 0 rgba(0,0,0,0.7);letter-spacing:0.8px;">MATIC</div>
<svg style="left:338.7px;top:682.9px" width="29" height="29" viewBox="0 0 29 29"><circle cx="14.5" cy="14.5" r="11" fill="none" stroke="#4f6478" stroke-width="3.2" opacity="0.75"/><circle cx="14.5" cy="14.5" r="9" fill="none" stroke="#e8eef4" stroke-width="1.2" opacity="0.7"/><circle cx="14.5" cy="14.5" r="4.8" fill="#5b8fc6"/></svg>
<svg style="left:586px;top:217px" width="62" height="62" viewBox="0 0 62 62"><circle cx="30.7" cy="30.4" r="26.3" fill="none" stroke="#E0EE5C" stroke-width="3.8" opacity="0.95"/><path d="M28.5 25 H33.5 M31 25 V37 M28.5 37 H33.5" stroke="#444" stroke-width="1.2"/></svg>
</body></html>
